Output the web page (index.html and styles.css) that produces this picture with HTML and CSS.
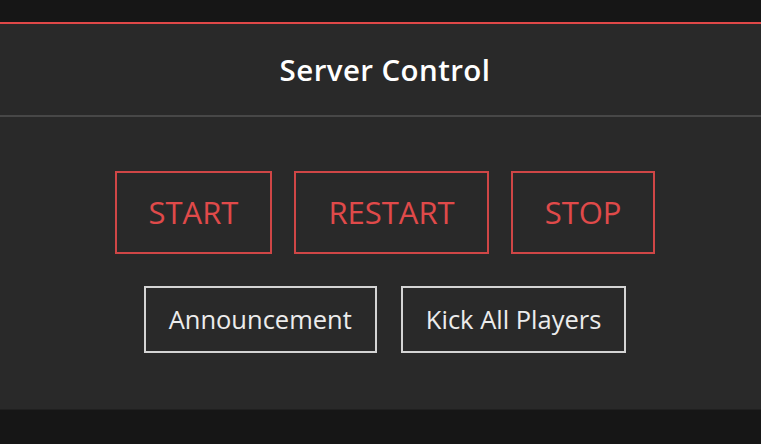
FILE: index.html
```html
<!DOCTYPE html>
<html lang="en">
<head>
    <meta charset="UTF-8">
    <meta name="viewport" content="width=device-width, initial-scale=1.0">
    <title>Server Control</title>
    <link rel="stylesheet" href="styles.css">
</head>
<body>
    <div class="topbar"></div>
    <div class="panel">
        <div class="panel-header">
            <h2>Server Control</h2>
        </div>
        <div class="panel-body">
            <div class="btn-row">
                <button class="btn btn-red">START</button>
                <button class="btn btn-red">RESTART</button>
                <button class="btn btn-red">STOP</button>
            </div>
            <div class="btn-row small">
                <button class="btn btn-white">Announcement</button>
                <button class="btn btn-white">Kick All Players</button>
            </div>
        </div>
    </div>
</body>
</html>
```

FILE: styles.css
```css
html, body {
    margin: 0;
    padding: 0;
    height: 100%;
}
body {
    background-color: #161616;
    font-family: "Open Sans", "Noto Sans", Arial, sans-serif;
    color: #eeeeee;
}
.topbar {
    height: 22px;
    background: #161616;
}
.panel {
    background: #292929;
    border-top: 2px solid #e04848;
    border-bottom: 1px solid #202020;
    height: 388px;
    box-sizing: border-box;
}
.panel-header {
    height: 93px;
    box-sizing: border-box;
    border-bottom: 2px solid #474747;
    display: flex;
    align-items: center;
    justify-content: center;
    padding-left: 9px;
}
.panel-header h2 {
    margin: 0;
    font-size: 29.5px;
    font-weight: 600;
    letter-spacing: 0.4px;
    color: #ffffff;
}
.panel-body {
    padding-top: 54px;
    padding-left: 9px;
    display: flex;
    flex-direction: column;
    align-items: center;
    gap: 32px;
}
.btn-row {
    display: flex;
    justify-content: center;
    gap: 22px;
}
.btn-row.small {
    gap: 24px;
}
.btn {
    background: transparent;
    font-family: inherit;
    cursor: pointer;
    box-sizing: border-box;
    line-height: 1;
}
.btn-red {
    border: 2px solid #cf4646;
    color: #e04a4a;
    font-size: 31px;
    height: 83px;
    padding: 0 32px;
}
.btn-white {
    border: 2px solid #d4d4d4;
    color: #ececec;
    font-size: 25.5px;
    height: 67px;
    padding: 0 23px;
}
```
